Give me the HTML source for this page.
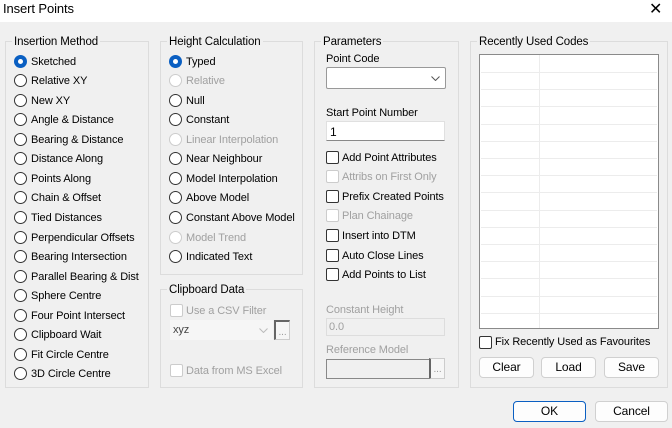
<!DOCTYPE html><html><head><style>
*{margin:0;padding:0;box-sizing:border-box}
body{width:672px;height:428px;background:#f0f0f0;font-family:"Liberation Sans",sans-serif;font-size:11px;letter-spacing:-0.1px;color:#000;position:relative;overflow:hidden}
.a{position:absolute;white-space:nowrap}
.title{left:0;top:0;width:672px;height:22px;background:#fff}
.gb{position:absolute;border:1px solid #dcdcdc}
.lg{position:absolute;background:#f0f0f0;padding:0 2px;top:-7px;left:6px;line-height:14px;font-size:11.5px}
.r{position:absolute;width:13px;height:13px;border:1px solid #333;border-radius:50%;background:#fff}
.r.on{border:none;background:#0a5fc2}
.r.on:after{content:"";position:absolute;left:4px;top:4px;width:5px;height:5px;border-radius:50%;background:#fff}
.r.dis{border-color:#ccc}
.c{position:absolute;width:13px;height:13px;border:1px solid #333;border-radius:2px;background:#fff}
.c.dis{border-color:#ccc}
.dis-t{color:#a0a0a0}
.inp{position:absolute;background:#fff;border:1px solid #d0d0d0;border-bottom-color:#888}
.btn{position:absolute;background:#fdfdfd;border:1px solid #d0d0d0;border-radius:4px;text-align:center;line-height:18px;font-size:12px}
</style></head><body>
<div class="a title"></div>
<div class="a" style="left:3px;top:1px;font-size:13px">Insert Points</div>
<div class="a" style="left:649px;top:-1px;font-size:16px">✕</div>

<div class="gb" style="left:5px;top:41px;width:144px;height:347px"><span class="lg">Insertion Method</span></div>
<div class="gb" style="left:160px;top:41px;width:143px;height:234px"><span class="lg">Height Calculation</span></div>
<div class="gb" style="left:160px;top:289px;width:143px;height:99px"><span class="lg">Clipboard Data</span></div>
<div class="gb" style="left:314px;top:41px;width:145px;height:347px"><span class="lg">Parameters</span></div>
<div class="gb" style="left:470px;top:41px;width:198px;height:347px"><span class="lg">Recently Used Codes</span></div>

<div class="a" style="left:479px;top:54px;width:180px;height:275px;background:#fff;border:1px solid #8a8a8a"></div>
<div class="a" style="left:539px;top:55px;width:1px;height:273px;background:#ececec"></div>

<div id="L"></div>
<script>
var L=["Sketched","Relative XY","New XY","Angle &amp; Distance","Bearing &amp; Distance","Distance Along","Points Along","Chain &amp; Offset","Tied Distances","Perpendicular Offsets","Bearing Intersection","Parallel Bearing &amp; Dist","Sphere Centre","Four Point Intersect","Clipboard Wait","Fit Circle Centre","3D Circle Centre"];
var H=[["Typed",0],["Relative",1],["Null",0],["Constant",0],["Linear Interpolation",1],["Near Neighbour",0],["Model Interpolation",0],["Above Model",0],["Constant Above Model",0],["Model Trend",1],["Indicated Text",0]];
var P=[["Add Point Attributes",0],["Attribs on First Only",1],["Prefix Created Points",0],["Plan Chainage",1],["Insert into DTM",0],["Auto Close Lines",0],["Add Points to List",0]];
var h="";
function y(i){return 61+i*19.56}
L.forEach(function(t,i){h+='<div class="r'+(i==0?' on':'')+'" style="left:14px;top:'+(y(i)-6.5)+'px"></div><div class="a" style="left:31px;top:'+(y(i)-5.5)+'px">'+t+'</div>'});
H.forEach(function(t,i){h+='<div class="r'+(i==0?' on':'')+(t[1]?' dis':'')+'" style="left:169px;top:'+(y(i)-6.5)+'px"></div><div class="a'+(t[1]?' dis-t':'')+'" style="left:186px;top:'+(y(i)-5.5)+'px">'+t[0]+'</div>'});
P.forEach(function(t,i){var yy=157+i*19.6;h+='<div class="c'+(t[1]?' dis':'')+'" style="left:326px;top:'+(yy-6.5)+'px"></div><div class="a'+(t[1]?' dis-t':'')+'" style="left:342px;top:'+(yy-5.5)+'px">'+t[0]+'</div>'});
for(var i=0;i<15;i++){h+='<div class="a" style="left:481px;width:176px;top:'+(72+i*17.2)+'px;height:1px;background:#ececec"></div>'}
document.getElementById("L").innerHTML=h;
</script>

<div class="a" style="left:326px;top:53px">Point Code</div>
<div class="inp" style="left:326px;top:67px;width:120px;height:22px;border:1px solid #999;border-radius:2px"><svg class="a" style="right:5px;top:8px" width="9" height="5"><path d="M0.5 0.5L4.5 4.5L8.5 0.5" fill="none" stroke="#555"/></svg></div>
<div class="a" style="left:326px;top:107px">Start Point Number</div>
<div class="inp" style="left:326px;top:121px;width:119px;height:20px;border-color:#e0e0e0 #e0e0e0 #888"><span class="a" style="left:3px;top:3px;font-size:12px">1</span></div>
<div class="a dis-t" style="left:326px;top:304px">Constant Height</div>
<div class="a" style="left:326px;top:318px;width:119px;height:18px;background:#f0f0f0;border:1px solid #ddd"><span class="a dis-t" style="left:2px;top:2px">0.0</span></div>
<div class="a dis-t" style="left:326px;top:344px">Reference Model</div>
<div class="a" style="left:326px;top:359px;width:104px;height:20px;border:1px solid #888;background:#f0f0f0"></div>
<div class="a" style="left:429px;top:358px;width:16px;height:21px;border:1px solid #ccc;border-left:2px solid #666;background:#f6f6f6;font-size:10px;color:#999;text-align:center;line-height:22px">...</div>

<div class="c dis" style="left:170px;top:304px"></div><div class="a dis-t" style="left:186px;top:305px">Use a CSV Filter</div>
<div class="a" style="left:170px;top:320px;width:103px;height:20px;background:#f6f6f6"><span class="a" style="left:3px;top:4px;color:#444">xyz</span><svg class="a" style="right:5px;top:8px" width="9" height="5"><path d="M0.5 0.5L4.5 4.5L8.5 0.5" fill="none" stroke="#bbb"/></svg></div>
<div class="a" style="left:274px;top:320px;width:16px;height:20px;border:1px solid #ccc;border-left:2px solid #666;border-top:2px solid #666;background:#f6f6f6;font-size:10px;color:#999;text-align:center;line-height:22px">...</div>
<div class="c dis" style="left:170px;top:364px"></div><div class="a dis-t" style="left:186px;top:365px">Data from MS Excel</div>

<div class="c" style="left:479px;top:336px"></div><div class="a" style="left:495px;top:336px">Fix Recently Used as Favourites</div>
<div class="btn" style="left:479px;top:357px;width:55px;height:21px">Clear</div>
<div class="btn" style="left:541px;top:357px;width:55px;height:21px">Load</div>
<div class="btn" style="left:604px;top:357px;width:55px;height:21px">Save</div>
<div class="btn" style="left:513px;top:401px;width:73px;height:21px;border:1px solid #0a5fc2">OK</div>
<div class="btn" style="left:595px;top:401px;width:73px;height:21px">Cancel</div>
</body></html>
